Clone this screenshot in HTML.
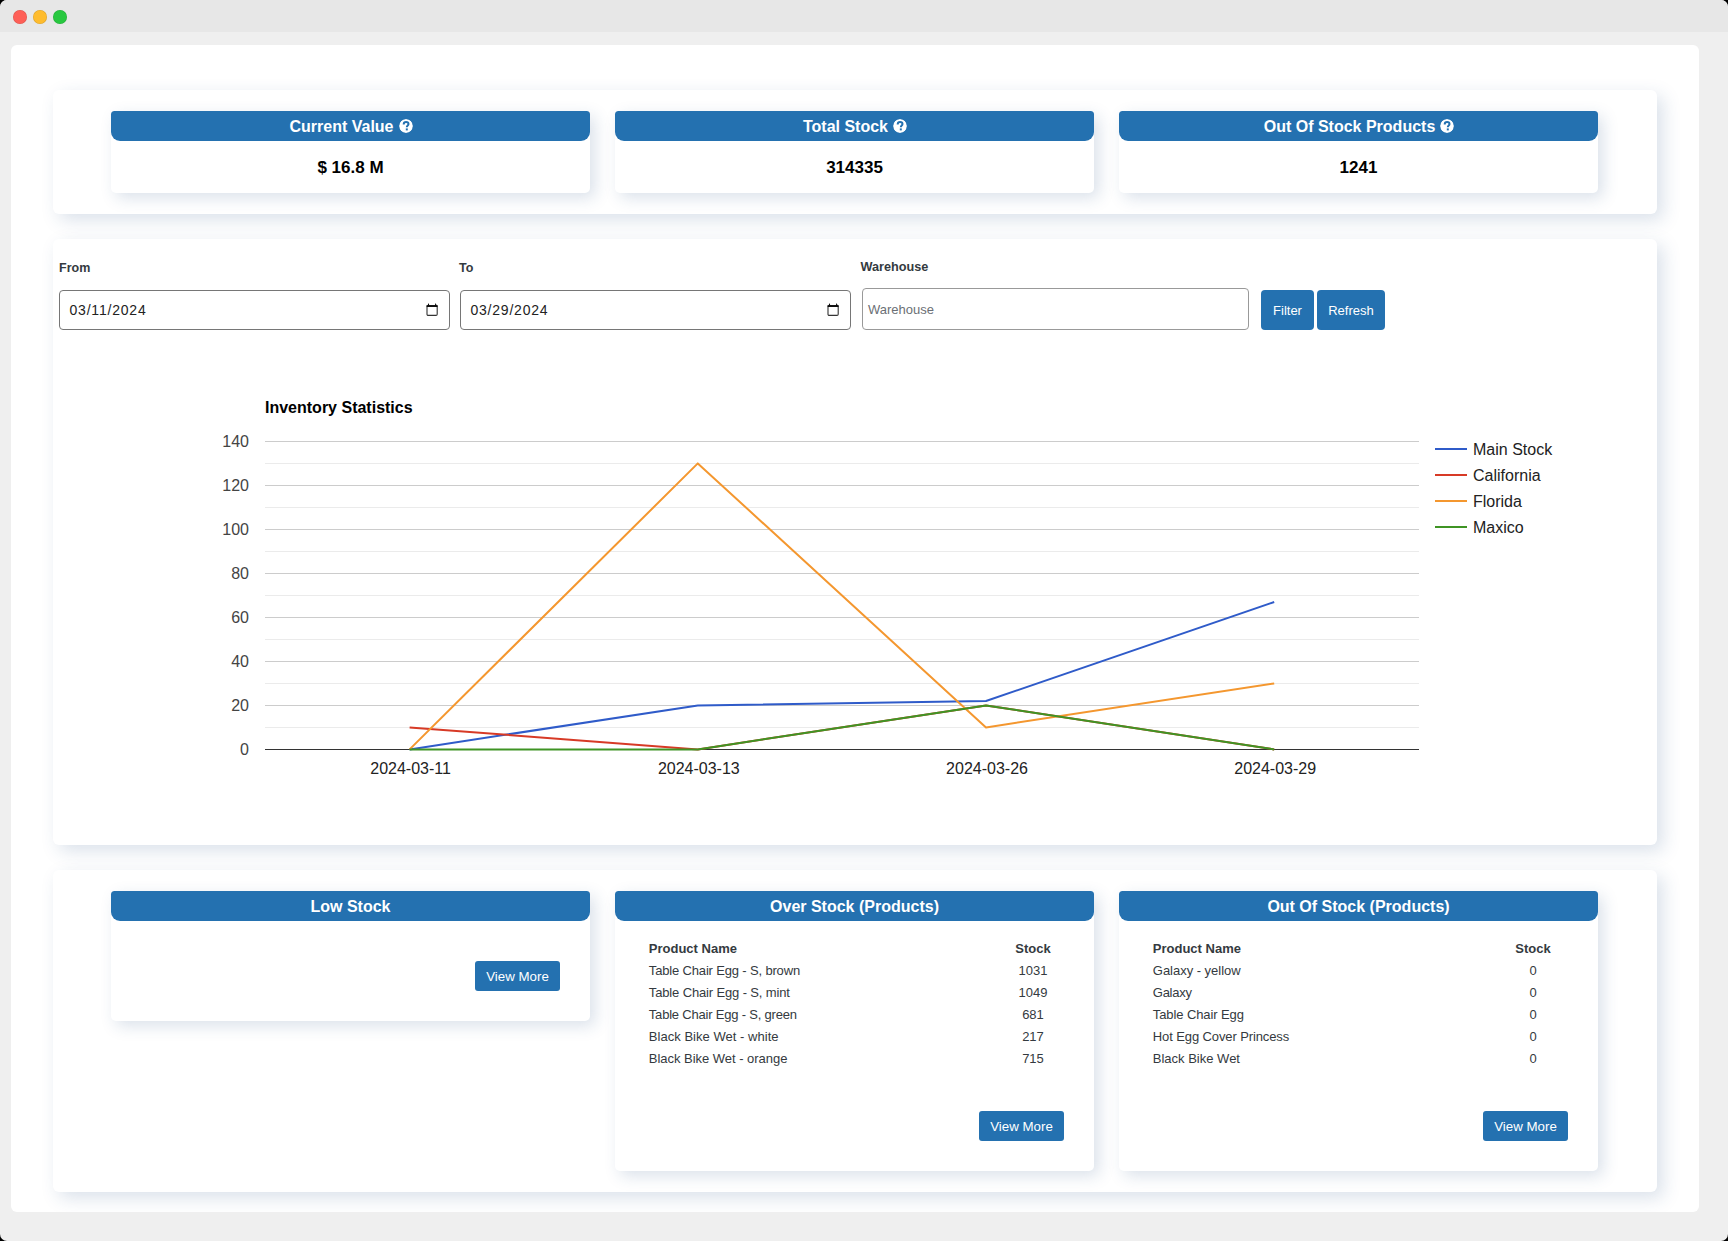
<!DOCTYPE html>
<html><head><meta charset="utf-8">
<style>
*{box-sizing:border-box;margin:0;padding:0}
html,body{width:1728px;height:1241px;overflow:hidden;background:#000;font-family:"Liberation Sans",sans-serif}
#win{position:absolute;left:0;top:0;width:1728px;height:1241px;border-radius:7px;background:#efefef;overflow:hidden}
#bar{position:absolute;left:0;top:0;width:1728px;height:32px;background:#e7e7e7}
.dot{position:absolute;top:9.9px;width:13.8px;height:13.8px;border-radius:50%;box-shadow:inset 0 0 0 0.6px rgba(0,0,0,0.13)}
#page{position:absolute;left:11px;top:45px;width:1688px;height:1167px;background:#fff;border-radius:6px;overflow:hidden}
.sec{position:absolute;left:53px;width:1604px;background:#fff;border-radius:6px;box-shadow:6px 6px 18px rgba(35,80,130,0.17)}
.card{position:absolute;width:479px;background:#fff;border-radius:5px;box-shadow:5px 5px 16px rgba(35,80,130,0.17)}
.hd{position:absolute;width:479px;height:30px;background:#2471b0;border-radius:3.5px 3.5px 9px 9px}
.t{position:absolute;white-space:nowrap}
.q{position:absolute;width:14px;height:14px;border-radius:50%;background:#fff}
.inp{position:absolute;border:1px solid #767676;border-radius:4px;background:#fff}
.btn{position:absolute;background:#2471b0;border-radius:4px}
</style></head><body>
<div id="win"><div id="bar"><div class="dot" style="left:13.1px;background:#fe5f57"></div><div class="dot" style="left:33.1px;background:#febc2e"></div><div class="dot" style="left:53.1px;background:#28c840"></div></div><div id="page"><div style="position:absolute;left:-11px;top:-45px;width:1728px;height:1241px">
<div class="sec" style="top:90px;height:124px"></div>
<div class="card" style="left:111px;top:111px;height:82px"></div>
<div class="hd" style="left:111px;top:111px"></div>
<div class="t" style="left:111px;width:479px;text-align:center;top:116.76px;font-size:16px;line-height:19.2px;font-weight:bold;color:#fff">Current Value<span style="display:inline-block;width:18px"></span></div>
<div class="t" style="left:50.5px;width:600px;text-align:center;top:157.91px;font-size:17px;line-height:20.4px;color:#000;font-weight:bold;">$ 16.8 M</div>
<div class="card" style="left:615px;top:111px;height:82px"></div>
<div class="hd" style="left:615px;top:111px"></div>
<div class="t" style="left:615px;width:479px;text-align:center;top:116.76px;font-size:16px;line-height:19.2px;font-weight:bold;color:#fff">Total Stock<span style="display:inline-block;width:18px"></span></div>
<div class="t" style="left:554.5px;width:600px;text-align:center;top:157.91px;font-size:17px;line-height:20.4px;color:#000;font-weight:bold;">314335</div>
<div class="card" style="left:1119px;top:111px;height:82px"></div>
<div class="hd" style="left:1119px;top:111px"></div>
<div class="t" style="left:1119px;width:479px;text-align:center;top:116.76px;font-size:16px;line-height:19.2px;font-weight:bold;color:#fff">Out Of Stock Products<span style="display:inline-block;width:18px"></span></div>
<div class="t" style="left:1058.5px;width:600px;text-align:center;top:157.91px;font-size:17px;line-height:20.4px;color:#000;font-weight:bold;">1241</div>
<svg class="q" style="left:399px;top:119.2px;background:none" width="14" height="14" viewBox="0 0 14 14"><circle cx="7" cy="7" r="6.9" fill="#fff"/><path d="M4.7 5.4 C4.7 3.9 5.7 3.1 7.1 3.1 C8.5 3.1 9.5 3.9 9.5 5.1 C9.5 6.6 7.8 6.6 7.8 8.3" fill="none" stroke="#2471b0" stroke-width="2" stroke-linecap="butt"/><rect x="6.8" y="9.4" width="2" height="2" fill="#2471b0"/></svg>
<svg class="q" style="left:893px;top:119.2px;background:none" width="14" height="14" viewBox="0 0 14 14"><circle cx="7" cy="7" r="6.9" fill="#fff"/><path d="M4.7 5.4 C4.7 3.9 5.7 3.1 7.1 3.1 C8.5 3.1 9.5 3.9 9.5 5.1 C9.5 6.6 7.8 6.6 7.8 8.3" fill="none" stroke="#2471b0" stroke-width="2" stroke-linecap="butt"/><rect x="6.8" y="9.4" width="2" height="2" fill="#2471b0"/></svg>
<svg class="q" style="left:1439.5px;top:119.2px;background:none" width="14" height="14" viewBox="0 0 14 14"><circle cx="7" cy="7" r="6.9" fill="#fff"/><path d="M4.7 5.4 C4.7 3.9 5.7 3.1 7.1 3.1 C8.5 3.1 9.5 3.9 9.5 5.1 C9.5 6.6 7.8 6.6 7.8 8.3" fill="none" stroke="#2471b0" stroke-width="2" stroke-linecap="butt"/><rect x="6.8" y="9.4" width="2" height="2" fill="#2471b0"/></svg>
<div class="sec" style="top:239px;height:606px"></div>
<div class="t" style="left:59px;top:261.27px;font-size:12.5px;line-height:15.0px;color:#343a40;font-weight:bold;">From</div>
<div class="t" style="left:459px;top:261.27px;font-size:12.5px;line-height:15.0px;color:#343a40;font-weight:bold;">To</div>
<div class="t" style="left:860.5px;top:259.78px;font-size:12.7px;line-height:15.24px;color:#343a40;font-weight:bold;">Warehouse</div>
<div class="inp" style="left:59px;top:290px;width:391px;height:40px"></div>
<div class="inp" style="left:460px;top:290px;width:391px;height:40px"></div>
<div class="t" style="left:69.5px;top:301.75px;font-size:14px;line-height:16.8px;color:#222;letter-spacing:0.8px;">03/11/2024</div>
<div class="t" style="left:470.4px;top:301.75px;font-size:14px;line-height:16.8px;color:#222;letter-spacing:0.8px;">03/29/2024</div>
<svg style="position:absolute;left:426px;top:303px" width="13" height="14" viewBox="0 0 13 14"><rect x="1" y="2.9" width="10.2" height="9.5" rx="1.2" fill="none" stroke="#333" stroke-width="1.1"/><rect x="0.5" y="2.2" width="11.2" height="1.7" fill="#000"/><path d="M1.6 2.4 L2.5 0 L3.4 2.4 Z M8.8 2.4 L9.7 0 L10.6 2.4 Z" fill="#000"/></svg>
<svg style="position:absolute;left:827px;top:303px" width="13" height="14" viewBox="0 0 13 14"><rect x="1" y="2.9" width="10.2" height="9.5" rx="1.2" fill="none" stroke="#333" stroke-width="1.1"/><rect x="0.5" y="2.2" width="11.2" height="1.7" fill="#000"/><path d="M1.6 2.4 L2.5 0 L3.4 2.4 Z M8.8 2.4 L9.7 0 L10.6 2.4 Z" fill="#000"/></svg>
<div class="inp" style="left:862px;top:288px;width:387px;height:42px;border-color:#999"></div>
<div class="t" style="left:868px;top:301.50px;font-size:13px;line-height:15.6px;color:#6b6f75;">Warehouse</div>
<div class="btn" style="left:1261px;top:290px;width:53px;height:40px"></div>
<div class="btn" style="left:1317px;top:290px;width:68px;height:40px"></div>
<div class="t" style="left:987.5px;width:600px;text-align:center;top:302.50px;font-size:13px;line-height:15.6px;color:#fff;">Filter</div>
<div class="t" style="left:1051px;width:600px;text-align:center;top:302.50px;font-size:13px;line-height:15.6px;color:#fff;">Refresh</div>
<svg id="chart" width="1728" height="1241" style="position:absolute;left:0;top:0">
<text x="265" y="413" font-family="Liberation Sans" font-size="16" font-weight="bold" fill="#000">Inventory Statistics</text>
<rect x="265" y="727" width="1154" height="1" fill="#ebebeb"/>
<rect x="265" y="683" width="1154" height="1" fill="#ebebeb"/>
<rect x="265" y="639" width="1154" height="1" fill="#ebebeb"/>
<rect x="265" y="595" width="1154" height="1" fill="#ebebeb"/>
<rect x="265" y="551" width="1154" height="1" fill="#ebebeb"/>
<rect x="265" y="507" width="1154" height="1" fill="#ebebeb"/>
<rect x="265" y="463" width="1154" height="1" fill="#ebebeb"/>
<rect x="265" y="705" width="1154" height="1" fill="#cccccc"/>
<rect x="265" y="661" width="1154" height="1" fill="#cccccc"/>
<rect x="265" y="617" width="1154" height="1" fill="#cccccc"/>
<rect x="265" y="573" width="1154" height="1" fill="#cccccc"/>
<rect x="265" y="529" width="1154" height="1" fill="#cccccc"/>
<rect x="265" y="485" width="1154" height="1" fill="#cccccc"/>
<rect x="265" y="441" width="1154" height="1" fill="#cccccc"/>
<text x="249" y="755" text-anchor="end" font-family="Liberation Sans" font-size="16" fill="#444">0</text>
<text x="249" y="711" text-anchor="end" font-family="Liberation Sans" font-size="16" fill="#444">20</text>
<text x="249" y="667" text-anchor="end" font-family="Liberation Sans" font-size="16" fill="#444">40</text>
<text x="249" y="623" text-anchor="end" font-family="Liberation Sans" font-size="16" fill="#444">60</text>
<text x="249" y="579" text-anchor="end" font-family="Liberation Sans" font-size="16" fill="#444">80</text>
<text x="249" y="535" text-anchor="end" font-family="Liberation Sans" font-size="16" fill="#444">100</text>
<text x="249" y="491" text-anchor="end" font-family="Liberation Sans" font-size="16" fill="#444">120</text>
<text x="249" y="447" text-anchor="end" font-family="Liberation Sans" font-size="16" fill="#444">140</text>
<text x="410.6" y="774" text-anchor="middle" font-family="Liberation Sans" font-size="16" fill="#222">2024-03-11</text>
<text x="698.8" y="774" text-anchor="middle" font-family="Liberation Sans" font-size="16" fill="#222">2024-03-13</text>
<text x="987.0" y="774" text-anchor="middle" font-family="Liberation Sans" font-size="16" fill="#222">2024-03-26</text>
<text x="1275.2" y="774" text-anchor="middle" font-family="Liberation Sans" font-size="16" fill="#222">2024-03-29</text>
<rect x="265" y="749" width="1154" height="1" fill="#333"/>
<polyline points="409.6,749.4 697.8,705.4 986.0,701.0 1274.2,602.0" fill="none" stroke="#2f5bc9" stroke-width="2" stroke-linejoin="round"/>
<polyline points="409.6,727.4 697.8,749.4 986.0,705.4 1274.2,749.4" fill="none" stroke="#d73a26" stroke-width="2" stroke-linejoin="round"/>
<polyline points="409.6,749.4 697.8,463.4 986.0,727.4 1274.2,683.4" fill="none" stroke="#f4972f" stroke-width="2" stroke-linejoin="round"/>
<polyline points="409.6,749.4 697.8,749.4 986.0,705.4 1274.2,749.4" fill="none" stroke="#3f9424" stroke-width="2" stroke-linejoin="round"/>
<rect x="1435" y="448" width="32" height="2" fill="#2f5bc9"/>
<text x="1473" y="455" font-family="Liberation Sans" font-size="16" fill="#222">Main Stock</text>
<rect x="1435" y="474" width="32" height="2" fill="#d73a26"/>
<text x="1473" y="481" font-family="Liberation Sans" font-size="16" fill="#222">California</text>
<rect x="1435" y="500" width="32" height="2" fill="#f4972f"/>
<text x="1473" y="507" font-family="Liberation Sans" font-size="16" fill="#222">Florida</text>
<rect x="1435" y="526" width="32" height="2" fill="#3f9424"/>
<text x="1473" y="533" font-family="Liberation Sans" font-size="16" fill="#222">Maxico</text>
</svg>
<div class="sec" style="top:870px;height:322px"></div>
<div class="card" style="left:111px;top:891px;height:130px"></div>
<div class="hd" style="left:111px;top:891px"></div>
<div class="t" style="left:50.5px;width:600px;text-align:center;top:896.76px;font-size:16px;line-height:19.2px;color:#fff;font-weight:bold;">Low Stock</div>
<div class="card" style="left:615px;top:891px;height:280px"></div>
<div class="hd" style="left:615px;top:891px"></div>
<div class="t" style="left:554.5px;width:600px;text-align:center;top:896.76px;font-size:16px;line-height:19.2px;color:#fff;font-weight:bold;">Over Stock (Products)</div>
<div class="card" style="left:1119px;top:891px;height:280px"></div>
<div class="hd" style="left:1119px;top:891px"></div>
<div class="t" style="left:1058.5px;width:600px;text-align:center;top:896.76px;font-size:16px;line-height:19.2px;color:#fff;font-weight:bold;">Out Of Stock (Products)</div>
<div class="btn" style="left:475px;top:961px;width:85px;height:30px;border-radius:3px"></div><div class="t" style="left:217.5px;width:600px;text-align:center;top:968.91px;font-size:13.3px;line-height:15.96px;color:#fff;">View More</div>
<div class="t" style="left:648.8px;top:940.50px;font-size:13px;line-height:15.6px;color:#343a40;font-weight:bold;">Product Name</div>
<div class="t" style="left:733px;width:600px;text-align:center;top:940.50px;font-size:13px;line-height:15.6px;color:#343a40;font-weight:bold;">Stock</div>
<div class="t" style="left:648.8px;top:962.70px;font-size:13px;line-height:15.6px;color:#343a40;letter-spacing:-0.16px;">Table Chair Egg - S, brown</div>
<div class="t" style="left:733px;width:600px;text-align:center;top:962.70px;font-size:13px;line-height:15.6px;color:#343a40;">1031</div>
<div class="t" style="left:648.8px;top:984.65px;font-size:13px;line-height:15.6px;color:#343a40;letter-spacing:-0.142px;">Table Chair Egg - S, mint</div>
<div class="t" style="left:733px;width:600px;text-align:center;top:984.65px;font-size:13px;line-height:15.6px;color:#343a40;">1049</div>
<div class="t" style="left:648.8px;top:1006.60px;font-size:13px;line-height:15.6px;color:#343a40;letter-spacing:-0.2px;">Table Chair Egg - S, green</div>
<div class="t" style="left:733px;width:600px;text-align:center;top:1006.60px;font-size:13px;line-height:15.6px;color:#343a40;">681</div>
<div class="t" style="left:648.8px;top:1028.55px;font-size:13px;line-height:15.6px;color:#343a40;letter-spacing:0.033px;">Black Bike Wet - white</div>
<div class="t" style="left:733px;width:600px;text-align:center;top:1028.55px;font-size:13px;line-height:15.6px;color:#343a40;">217</div>
<div class="t" style="left:648.8px;top:1050.50px;font-size:13px;line-height:15.6px;color:#343a40;letter-spacing:-0.027px;">Black Bike Wet - orange</div>
<div class="t" style="left:733px;width:600px;text-align:center;top:1050.50px;font-size:13px;line-height:15.6px;color:#343a40;">715</div>
<div class="btn" style="left:979px;top:1111px;width:85px;height:30px;border-radius:3px"></div><div class="t" style="left:721.5px;width:600px;text-align:center;top:1118.91px;font-size:13.3px;line-height:15.96px;color:#fff;">View More</div>
<div class="t" style="left:1152.8px;top:940.50px;font-size:13px;line-height:15.6px;color:#343a40;font-weight:bold;">Product Name</div>
<div class="t" style="left:1233px;width:600px;text-align:center;top:940.50px;font-size:13px;line-height:15.6px;color:#343a40;font-weight:bold;">Stock</div>
<div class="t" style="left:1152.8px;top:962.70px;font-size:13px;line-height:15.6px;color:#343a40;letter-spacing:-0.021px;">Galaxy - yellow</div>
<div class="t" style="left:1233px;width:600px;text-align:center;top:962.70px;font-size:13px;line-height:15.6px;color:#343a40;">0</div>
<div class="t" style="left:1152.8px;top:984.65px;font-size:13px;line-height:15.6px;color:#343a40;letter-spacing:-0.26px;">Galaxy</div>
<div class="t" style="left:1233px;width:600px;text-align:center;top:984.65px;font-size:13px;line-height:15.6px;color:#343a40;">0</div>
<div class="t" style="left:1152.8px;top:1006.60px;font-size:13px;line-height:15.6px;color:#343a40;letter-spacing:-0.1px;">Table Chair Egg</div>
<div class="t" style="left:1233px;width:600px;text-align:center;top:1006.60px;font-size:13px;line-height:15.6px;color:#343a40;">0</div>
<div class="t" style="left:1152.8px;top:1028.55px;font-size:13px;line-height:15.6px;color:#343a40;letter-spacing:-0.11px;">Hot Egg Cover Princess</div>
<div class="t" style="left:1233px;width:600px;text-align:center;top:1028.55px;font-size:13px;line-height:15.6px;color:#343a40;">0</div>
<div class="t" style="left:1152.8px;top:1050.50px;font-size:13px;line-height:15.6px;color:#343a40;">Black Bike Wet</div>
<div class="t" style="left:1233px;width:600px;text-align:center;top:1050.50px;font-size:13px;line-height:15.6px;color:#343a40;">0</div>
<div class="btn" style="left:1483px;top:1111px;width:85px;height:30px;border-radius:3px"></div><div class="t" style="left:1225.5px;width:600px;text-align:center;top:1118.91px;font-size:13.3px;line-height:15.96px;color:#fff;">View More</div>
</div></div></div>
</body></html>
